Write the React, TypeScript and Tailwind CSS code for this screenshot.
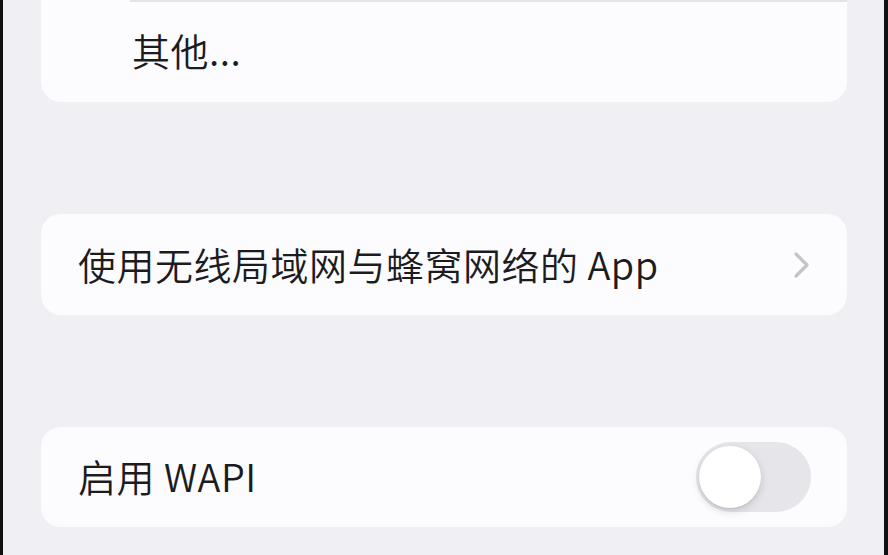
import React from "react";

const font = { fontFamily: '"Noto Sans CJK SC", "Noto Sans", sans-serif' };

export default function App() {
  return (
    <div className="flex h-[555px] w-[888px] overflow-hidden bg-[#f0eff4]" style={font}>
      <div className="w-[3px] shrink-0 bg-[#111111]" />
      <div className="flex flex-1 flex-col pl-[38px] pr-[37px]">
        <div className="h-[102px] rounded-b-[20px] bg-[#fcfbfe]">
          <div className="ml-[89px] flex h-full items-center border-t-2 border-[#e4e3e8] pb-[4px] pl-[2px]">
            <span className="text-[38px] font-[350] leading-none tracking-[0.5px] text-[#1c1c1e]">其他...</span>
          </div>
        </div>
        <div className="mt-[112px] flex h-[101px] items-center justify-between rounded-[20px] bg-[#fcfbfe] pl-[37px] pr-[37px]">
          <span className="pb-[2px] text-[38px] font-[350] leading-none tracking-[0.5px] text-[#1c1c1e]">使用无线局域网与蜂窝网络的 App</span>
          <svg width="16" height="28" viewBox="0 0 16 28" className="shrink-0">
            <polyline points="2,3 13,14 2,25" fill="none" stroke="#c4c4c8" strokeWidth="3.2" strokeLinecap="round" strokeLinejoin="round" />
          </svg>
        </div>
        <div className="mt-[112px] flex h-[100px] items-center justify-between rounded-[20px] bg-[#fcfbfe] pl-[37px] pr-[36px]">
          <span className="pb-[2px] text-[38px] font-[350] leading-none tracking-[0.5px] text-[#1c1c1e]">启用 WAPI</span>
          <div className="flex h-[70px] w-[115px] items-center rounded-full bg-[#e5e5ea] px-[3px]">
            <div className="h-[62px] w-[62px] rounded-full bg-white shadow-[0_3px_8px_rgba(0,0,0,0.15),0_1px_1px_rgba(0,0,0,0.08)]" />
          </div>
        </div>
      </div>
      <div className="w-[4px] shrink-0 bg-[#111111]" />
    </div>
  );
}
